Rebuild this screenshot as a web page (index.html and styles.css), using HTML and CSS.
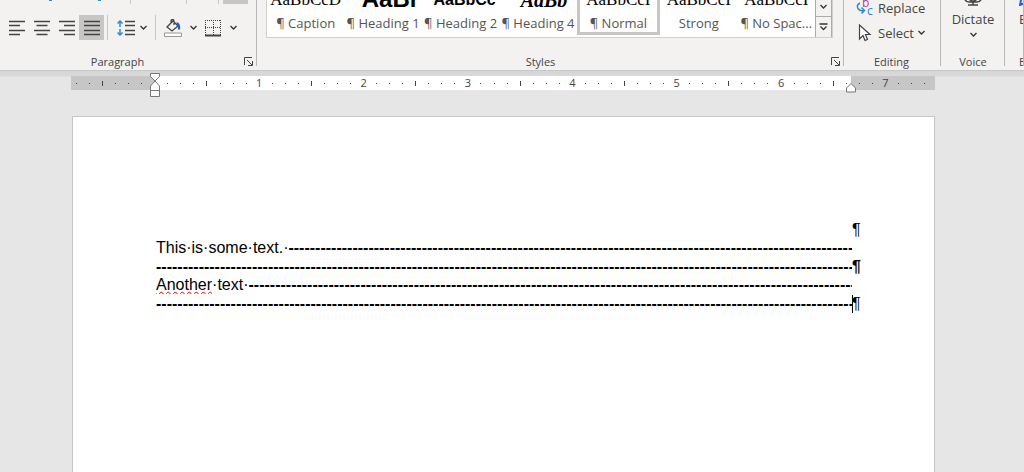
FILE: index.html
```html
<!DOCTYPE html>
<html lang="en">
<head>
    <meta charset="UTF-8">
    <meta name="viewport" content="width=device-width, initial-scale=1.0">
    <title>Document</title>
    <link rel="stylesheet" href="styles.css">
</head>
<body>
    <div class="ribbon">
        <div class="group group-paragraph">
            <div class="tools tools-top">
                <span class="bit blue"></span>
                <span class="bit blue"></span>
                <span class="sep"></span>
                <span class="sep"></span>
                <svg class="sort" width="18" height="4" viewBox="0 0 18 4"><path d="M1 0v2h6V0M13 0v2" fill="none" stroke="#333" stroke-width="1.5"/></svg>
                <span class="sep"></span>
                <button class="tool active" aria-label="Show marks"></button>
            </div>
            <div class="tools">
                <button class="tool" aria-label="Align left"><svg width="16" height="16" viewBox="0 0 16 16"><path d="M0 1.5h16M0 5.5h11M0 10.5h16M0 14.5h11"/></svg></button>
                <button class="tool" aria-label="Center"><svg width="16" height="16" viewBox="0 0 16 16"><path d="M0 1.5h16M2.5 5.5h11M0 10.5h16M2.5 14.5h11"/></svg></button>
                <button class="tool" aria-label="Align right"><svg width="16" height="16" viewBox="0 0 16 16"><path d="M0 1.5h16M5 5.5h11M0 10.5h16M5 14.5h11"/></svg></button>
                <button class="tool active" aria-label="Justify"><svg width="16" height="16" viewBox="0 0 16 16"><path d="M0 1.5h16M0 5.5h16M0 10.5h16M0 14.5h16"/></svg></button>
                <span class="sep"></span>
                <button class="tool wide spacing" aria-label="Line spacing">
                    <svg width="18" height="16" viewBox="0 0 18 16"><path d="M8 1.5h10M8 5.5h10M8 10.5h10M8 14.5h10"/><path class="blue-line" d="M3 1v6M.5 3.5L3 1l2.5 2.5M3 9v6M.5 12.5L3 15l2.5-2.5"/></svg>
                    <svg class="chev" width="7" height="5" viewBox="0 0 7 5"><path d="M.5 1l3 3 3-3"/></svg>
                </button>
                <span class="sep"></span>
                <button class="tool wide" aria-label="Shading">
                    <svg width="18" height="18" viewBox="0 0 18 18"><path d="M3 8l6-6 5 5-6 5zM7 4V2.500q0-2 1.500-2T10 2.500V6" stroke-width="1.300"/><path d="M12.500 4.500q3 0 2.500 6" stroke="#1f62b5" stroke-width="2.300"/><path d="M.5 14h17v3.500H.5z" fill="#fff" stroke="#999" stroke-width="1"/></svg>
                    <svg class="chev" width="7" height="5" viewBox="0 0 7 5"><path d="M.5 1l3 3 3-3"/></svg>
                </button>
                <button class="tool wide" aria-label="Borders">
                    <svg width="18" height="18" viewBox="0 0 18 18"><path d="M1 1.500h16M1 8.500h16M1.500 1v15M9.500 1v15M16.500 1v15" stroke-width="1" stroke-dasharray="1 1"/><path d="M1 16.500h16" stroke-width="2"/></svg>
                    <svg class="chev" width="7" height="5" viewBox="0 0 7 5"><path d="M.5 1l3 3 3-3"/></svg>
                </button>
            </div>
            <div class="group-name">Paragraph
                <button class="launcher" aria-label="Paragraph settings"><svg width="9" height="9" viewBox="0 0 9 9"><path d="M.5 8V.5H8M3 3l5 5M8.500 4v4.500H4"/></svg></button>
            </div>
        </div>

        <div class="group group-styles">
            <div class="gallery">
                <button class="style"><span class="sample">AaBbCcD</span>¶ Caption</button>
                <button class="style"><span class="sample heading1">AaBl</span>¶ Heading 1</button>
                <button class="style"><span class="sample heading2">AaBbCc</span>¶ Heading 2</button>
                <button class="style"><span class="sample heading4">AaBb</span>¶ Heading 4</button>
                <button class="style selected"><span class="sample">AaBbCcI</span>¶ Normal</button>
                <button class="style"><span class="sample">AaBbCcI</span>Strong</button>
                <button class="style"><span class="sample">AaBbCcI</span>¶ No Spac...</button>
                <div class="scroll">
                    <button aria-label="Next row"><svg class="chev" width="7" height="5" viewBox="0 0 7 5"><path d="M.5 1l3 3 3-3"/></svg></button>
                    <button aria-label="More styles"><svg class="chev" width="9" height="8" viewBox="0 0 9 8"><path d="M.5 1h8M1.500 3.500l3 3 3-3"/></svg></button>
                </div>
            </div>
            <div class="group-name">Styles
                <button class="launcher" aria-label="Styles settings"><svg width="9" height="9" viewBox="0 0 9 9"><path d="M.5 8V.5H8M3 3l5 5M8.500 4v4.500H4"/></svg></button>
            </div>
        </div>

        <div class="group group-editing">
            <button class="command">
                <svg width="18" height="18" viewBox="0 0 18 18"><path d="M4 4Q0 6 2 9.500q2 3 6 2M5.500 8.500L8.500 11.500l-3 3" stroke="#2b8ad6" stroke-width="1.500"/><text x="6" y="8" class="letter-b">b</text><text x="11" y="16" class="letter-c">c</text></svg>
                Replace
            </button>
            <button class="command">
                <svg width="18" height="18" viewBox="0 0 18 18"><path d="M3.500 1v14l3.500-3.500 2 5 2.500-1-2-5h4.500z" fill="#fff" stroke-width="1.200"/></svg>
                Select
                <svg class="chev" width="7" height="5" viewBox="0 0 7 5"><path d="M.5 1l3 3 3-3"/></svg>
            </button>
            <div class="group-name">Editing</div>
        </div>

        <div class="group group-voice">
            <button class="big">
                <svg width="20" height="24" viewBox="0 0 20 24"><path d="M6 4v11q0 4 4 4t4-4V4M1 15q1 5 5 5h8q4 0 5-5M10 20v3M5 23h10" stroke-width="1.500"/></svg>
                Dictate
                <svg class="chev" width="7" height="5" viewBox="0 0 7 5"><path d="M.5 1l3 3 3-3"/></svg>
            </button>
            <div class="group-name">Voice</div>
        </div>

        <div class="group group-editor">
            <button class="big">
                <svg width="20" height="24" viewBox="0 0 20 24"><path d="M8 8L2 18l-1 5 5-2L14 12" stroke="#2564cf" stroke-width="2"/></svg>
                Editor
            </button>
            <div class="group-name">Editor</div>
        </div>
    </div>

    <div class="workspace">
        <div class="ruler">
            <div class="scale" id="scale"></div>
            <svg class="indent indent-left" width="10" height="25" viewBox="0 0 10 25"><path d="M.5.5h9v3L5 8 .5 3.500zM5 8l4.500 5v4.500h-9V13zM.5 17.500h9v6h-9z"/></svg>
            <svg class="indent indent-right" width="10" height="10" viewBox="0 0 10 10"><path d="M5 .5l4.500 4.500v4h-9V5z"/></svg>
        </div>

        <div class="page">
            <p><span class="run"></span><span class="mark">¶</span></p>
            <p><span class="run">This·is·some·text.·<b>---------------------------------------------------------------------------------------------------------------------------------------------</b></span><span class="mark"></span></p>
            <p><span class="run"><b>---------------------------------------------------------------------------------------------------------------------------------------------</b></span><span class="mark"><b>¶</b></span></p>
            <p><span class="run"><span class="misspelled">Another</span>·text·<b>---------------------------------------------------------------------------------------------------------------------------------------------</b></span><span class="mark"></span></p>
            <p><span class="run"><b>---------------------------------------------------------------------------------------------------------------------------------------------</b></span><span class="mark caret">¶</span></p>
        </div>
    </div>

    <script>
        // one tick per eighth of an inch, zero sits on the left margin
        const scale = document.getElementById('scale');
        for (let i = -6; i < 60; i++) {
            const tick = document.createElement('span');
            if (i === 0) {
                tick.className = 'tick';
            } else if (i % 8 === 0) {
                tick.className = 'tick number';
                tick.textContent = i / 8;
            } else if (i % 4 === 0) {
                tick.className = 'tick half';
            } else {
                tick.className = 'tick dot';
            }
            scale.appendChild(tick);
        }
    </script>
</body>
</html>
```
FILE: styles.css
```css
* {
    box-sizing: border-box;
}

body {
    margin: 0;
    min-height: 100vh;
    display: flex;
    flex-direction: column;
    background-color: #e6e6e6;
    font-family: "Open Sans", "Noto Sans", sans-serif;
    font-size: 13px;
    color: #444;
}

button {
    margin: 0;
    padding: 0;
    border: none;
    background: none;
    font: inherit;
    color: inherit;
}

svg {
    flex: none;
    fill: none;
    stroke: #444;
    stroke-width: 1.5;
}

/* Ribbon */
.ribbon {
    display: flex;
    height: 71px;
    overflow: hidden;
    background-color: #f3f2f1;
    border-bottom: 1px solid #c8c8c8;
}

.group {
    position: relative;
    display: flex;
    flex-direction: column;
    justify-content: flex-end;
    flex: none;
}

.group > * {
    flex: none;
}

.group::after {
    content: "";
    position: absolute;
    right: 0;
    top: 0;
    bottom: 4px;
    width: 1px;
    background-color: #b8b8b8;
}

.group-paragraph {
    width: 257px;
}

.group-styles {
    flex: 1;
    min-width: 0;
}

.group-editing {
    width: 97px;
}

.group-voice {
    width: 64px;
}

.group-editor {
    width: 19px;
    overflow: hidden;
}

.group-name {
    position: relative;
    height: 16px;
    line-height: 16px;
    font-size: 11px;
    text-align: center;
    color: #444;
}

.group-paragraph .group-name {
    padding-right: 22px;
}

.group-styles .group-name {
    padding-right: 20px;
}

.group-editing .group-name {
    padding-right: 2px;
}

.launcher {
    position: absolute;
    right: 4px;
    top: 3px;
    height: 9px;
    line-height: 0;
}

.launcher svg {
    stroke-width: 1;
}

.tools {
    display: flex;
    height: 25px;
    margin-bottom: 14px;
    padding-left: 4px;
}

.tools-top {
    margin-bottom: 11px;
}

.tool {
    display: flex;
    align-items: center;
    justify-content: center;
    width: 25px;
}

.tool.wide {
    width: 40px;
    gap: 8px;
}

.tool.spacing {
    gap: 5px;
}

.tool.active {
    background-color: #c8c6c4;
}

.sep {
    width: 1px;
    margin: 0 4px 0 3px;
    background-color: #c8c6c4;
}

.tools-top .sep {
    margin: 0 0 0 29px;
}

.tools-top .sep + .sep {
    margin-left: 55px;
}

.tools-top .sort + .sep {
    margin-left: 6px;
    margin-right: 4px;
}

.sort {
    align-self: flex-end;
    margin: 0 0 3px 7px;
}

.bit {
    align-self: flex-end;
    width: 3px;
    height: 5px;
    margin: 0 0 3px 45px;
}

.bit + .bit {
    margin-left: 46px;
}

.blue {
    background-color: #2b8ad6;
}

.blue-line {
    stroke: #2b8ad6;
}

.chev {
    stroke: #333;
    stroke-width: 1.3;
}

/* Style gallery */
.gallery {
    display: flex;
    height: 78px;
    margin: 0 11px 16px 9px;
    background-color: #fff;
    border: 1px solid #d2d0ce;
}

.style {
    display: flex;
    flex: 1;
    min-width: 0;
    flex-direction: column;
    align-items: center;
    justify-content: flex-end;
    padding-bottom: 5px;
    line-height: 18px;
    color: #555;
    white-space: nowrap;
}

.style.selected {
    margin-bottom: 2px;
    padding-bottom: 0;
    border: 3px solid #c6c6c6;
}

.sample {
    margin-bottom: 5px;
    font-family: "Liberation Serif", serif;
    font-size: 17px;
    color: #000;
}

.sample.heading1 {
    padding-left: 12px;
    font: bold 24px/20px "Liberation Sans", sans-serif;
}

.sample.heading2 {
    padding-left: 8px;
    font: bold 16px/18px "Liberation Sans", sans-serif;
}

.sample.heading4 {
    padding-left: 12px;
    font-size: 20px;
    font-style: italic;
    font-weight: bold;
}

.scroll {
    display: flex;
    flex-direction: column;
    justify-content: flex-end;
    width: 17px;
}

.scroll button {
    display: flex;
    align-items: center;
    justify-content: center;
    height: 21px;
    background-color: #f3f2f1;
    border: 1px solid #ababab;
    border-bottom-width: 0;
}

/* Editing, voice */
.command {
    display: flex;
    align-items: center;
    gap: 4px;
    height: 25px;
    padding-left: 12px;
}

.command + .group-name {
    margin-top: 9px;
}

.letter-b,
.letter-c {
    font-size: 12px;
    stroke: none;
    fill: #a33fb5;
}

.letter-c {
    fill: #2b8ad6;
}

.big {
    display: flex;
    flex-direction: column;
    align-items: center;
    justify-content: flex-end;
    gap: 4px;
    height: 60px;
    margin-bottom: 17px;
    line-height: 18px;
}

.group-editor .big {
    align-items: flex-start;
    padding: 0 0 9px 14px;
}

.group-editor .group-name {
    padding-left: 14px;
    text-align: left;
}

/* Ruler */
.workspace {
    flex: 1;
    display: flex;
    flex-direction: column;
    padding: 5px 89px 0 71px;
    background: linear-gradient(#d6d6d6, #d9d9d9 5px, #e6e6e6 6px);
}

.ruler {
    position: relative;
    height: 14px;
    padding: 0 84px;
    background-color: #fff;
    border: solid #c6c6c6;
    border-width: 0 84px;
}

.scale {
    display: flex;
    justify-content: space-between;
    align-items: center;
    height: 14px;
    margin: 0 -159px 0 -163px;
}

.tick {
    display: flex;
    justify-content: center;
    width: 1px;
    font-size: 11px;
    line-height: 14px;
    color: #444;
}

.tick.dot {
    height: 1px;
    background-color: #444;
}

.tick.half {
    height: 5px;
    background-color: #444;
}

.indent {
    position: absolute;
    fill: #fff;
    stroke: #777;
    stroke-width: 1;
}

.indent-left {
    left: -5px;
    top: -3px;
}

.indent-right {
    right: -5px;
    top: 7px;
}

/* Page */
.page {
    flex: 1;
    margin: 26px 0 0 1px;
    padding: 104px 73px 0 83px;
    background-color: #fff;
    border: 1px solid #c6c6c6;
    border-bottom: none;
    font-family: "Liberation Sans", Arial, sans-serif;
    font-size: 16px;
    line-height: 18px;
    color: #000;
}

.page p {
    display: flex;
    margin: 0;
}

.page p:nth-child(even) {
    margin-bottom: 1px;
}

.run {
    flex: 1;
    min-width: 0;
    height: 18px;
    overflow: hidden;
    white-space: nowrap;
}

.mark {
    width: 9px;
}

.caret {
    position: relative;
}

.caret::before {
    content: "";
    position: absolute;
    left: 0;
    top: 0;
    width: 1px;
    height: 18px;
    background-color: #000;
}

.misspelled {
    text-decoration: underline wavy #f00 1px;
    text-decoration-skip-ink: none;
    text-underline-offset: 1px;
}
```
